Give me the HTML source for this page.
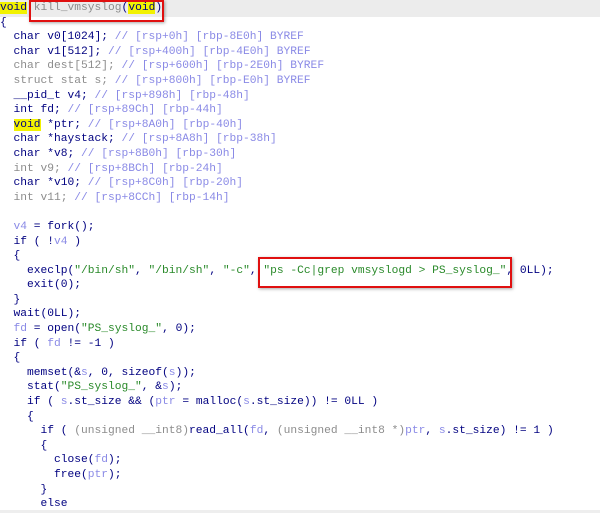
<html><head><style>
body{margin:0;width:600px;height:513px;background:#fff;overflow:hidden;position:relative}
pre{margin:0;position:absolute;left:0;top:1px;font:11.25px/14.6px "Liberation Mono",monospace;color:#000080}
.c{color:#8a8ae6}.g{color:#8c8c8c}.s{color:#2a8a2a}.y{background:#f2f200}
.hl{position:absolute;left:0;top:0;width:600px;height:17px;background:#ececec}
.box{position:absolute;border:2px solid #e01010;box-shadow:1px 1px 3px rgba(0,0,0,.35)}
.bot{position:absolute;left:0;top:510px;width:600px;height:3px;background:#eee}
</style></head><body>
<div class="hl"></div>
<pre><span class="y">void</span> <span class="g">kill_vmsyslog</span>(<span class="y">void</span>)
{
  char v0[1024]; <span class="c">// [rsp+0h] [rbp-8E0h] BYREF</span>
  char v1[512]; <span class="c">// [rsp+400h] [rbp-4E0h] BYREF</span>
<span class="g">  char dest[512]; </span><span class="c">// [rsp+600h] [rbp-2E0h] BYREF</span>
<span class="g">  struct stat s; </span><span class="c">// [rsp+800h] [rbp-E0h] BYREF</span>
  __pid_t v4; <span class="c">// [rsp+898h] [rbp-48h]</span>
  int fd; <span class="c">// [rsp+89Ch] [rbp-44h]</span>
  <span class="y">void</span> *ptr; <span class="c">// [rsp+8A0h] [rbp-40h]</span>
  char *haystack; <span class="c">// [rsp+8A8h] [rbp-38h]</span>
  char *v8; <span class="c">// [rsp+8B0h] [rbp-30h]</span>
<span class="g">  int v9; </span><span class="c">// [rsp+8BCh] [rbp-24h]</span>
  char *v10; <span class="c">// [rsp+8C0h] [rbp-20h]</span>
<span class="g">  int v11; </span><span class="c">// [rsp+8CCh] [rbp-14h]</span>

  <span class="c">v4</span> = fork();
  if ( !<span class="c">v4</span> )
  {
    execlp(<span class="s">"/bin/sh"</span>, <span class="s">"/bin/sh"</span>, <span class="s">"-c"</span>, <span class="s">"ps -Cc|grep vmsyslogd &gt; PS_syslog_"</span>, 0LL);
    exit(0);
  }
  wait(0LL);
  <span class="c">fd</span> = open(<span class="s">"PS_syslog_"</span>, 0);
  if ( <span class="c">fd</span> != -1 )
  {
    memset(&amp;<span class="c">s</span>, 0, sizeof(<span class="c">s</span>));
    stat(<span class="s">"PS_syslog_"</span>, &amp;<span class="c">s</span>);
    if ( <span class="c">s</span>.st_size &amp;&amp; (<span class="c">ptr</span> = malloc(<span class="c">s</span>.st_size)) != 0LL )
    {
      if ( <span class="g">(unsigned __int8)</span>read_all(<span class="c">fd</span>, <span class="g">(unsigned __int8 *)</span><span class="c">ptr</span>, <span class="c">s</span>.st_size) != 1 )
      {
        close(<span class="c">fd</span>);
        free(<span class="c">ptr</span>);
      }
      else</pre>
<div class="box" style="left:29px;top:0px;width:131px;height:18px"></div>
<div class="box" style="left:258px;top:257px;width:250px;height:27px"></div>
<div class="bot"></div>
</body></html>
